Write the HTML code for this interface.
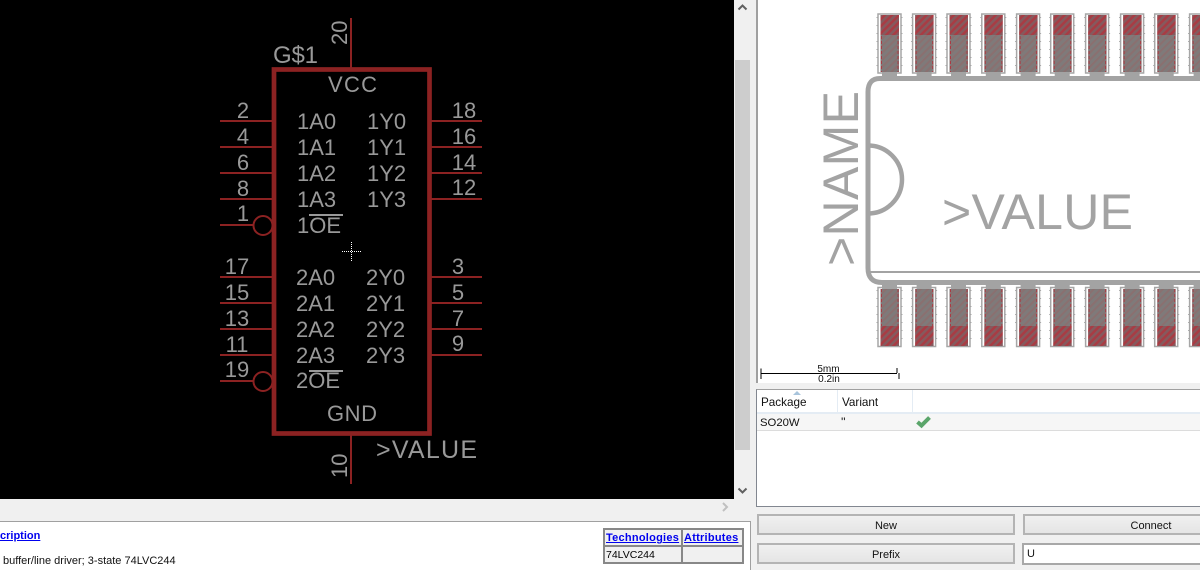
<!DOCTYPE html>
<html><head><meta charset="utf-8"><style>
html,body{margin:0;padding:0;background:#f0f0f0}
#r{position:relative;width:1200px;height:570px;overflow:hidden;background:#f0f0f0;font-family:"Liberation Sans",sans-serif}
#r>*{position:absolute}
.btn{box-sizing:border-box;border:2px solid #b4b4b4;background:linear-gradient(#f0f0f0,#e5e5e5);font-size:11px;color:#111;text-align:center;line-height:21px}
.h{font-size:12px;color:#111}
a{color:#0000ee;font-weight:bold;text-decoration:underline}
td{border:2px solid #888;padding:1px 1px 0;font-size:10.5px;height:14px;white-space:nowrap}
td a{font-size:11px;letter-spacing:.25px}
</style></head><body><div id="r">
<svg style="left:0;top:0" width="734" height="499" viewBox="0 0 734 499">
<rect width="734" height="499" fill="#000"/>
<g fill="none" stroke="#8c2222" stroke-width="2">
<path d="M351 18V68M351 434V484"/>
<path d="M220 121H272M220 147H272M220 173H272M220 199H272M220 225H253M220 277H272M220 303H272M220 329H272M220 355H272M220 381H253"/>
<path d="M430 121H482M430 147H482M430 173H482M430 199H482M430 277H482M430 303H482M430 329H482M430 355H482"/>
<circle cx="263" cy="225.500" r="9.500"/><circle cx="263" cy="381.500" r="9.500"/>
<rect x="274" y="69.500" width="155.500" height="364" stroke-width="4.700"/>
</g>
<g fill="#999" font-size="22" font-family="Liberation Sans">
<text x="273" y="63" font-size="24" textLength="45">G$1</text>
<text x="328" y="92" textLength="49">VCC</text>
<text x="327" y="421" textLength="50">GND</text>
<text x="376" y="458" font-size="25" textLength="101">&gt;VALUE</text>
<text transform="translate(347,45) rotate(-90)">20</text>
<text transform="translate(347,478) rotate(-90)">10</text>
<g text-anchor="middle"><text x="243" y="118">2</text><text x="243" y="144">4</text><text x="243" y="170">6</text><text x="243" y="196">8</text><text x="243" y="221">1</text>
<text x="237" y="274">17</text><text x="237" y="300">15</text><text x="237" y="326">13</text><text x="237" y="352">11</text><text x="237" y="377">19</text>
<text x="458" y="274">3</text><text x="458" y="300">5</text><text x="458" y="326">7</text><text x="458" y="351">9</text>
<text x="464" y="118">18</text><text x="464" y="144">16</text><text x="464" y="170">14</text><text x="464" y="195">12</text></g>
<text x="297" y="129">1A0</text><text x="297" y="155">1A1</text><text x="297" y="181">1A2</text><text x="297" y="207">1A3</text><text x="297" y="233">1OE</text>
<text x="367" y="129">1Y0</text><text x="367" y="155">1Y1</text><text x="367" y="181">1Y2</text><text x="367" y="207">1Y3</text>
<text x="296" y="285">2A0</text><text x="296" y="311">2A1</text><text x="296" y="337">2A2</text><text x="296" y="363">2A3</text><text x="296" y="388">2OE</text>
<text x="366" y="285">2Y0</text><text x="366" y="311">2Y1</text><text x="366" y="337">2Y2</text><text x="366" y="363">2Y3</text>
<rect x="309" y="214" width="34" height="2"/><rect x="309" y="370" width="34" height="2"/>
</g>
<path d="M342 251.500H361M351.500 242V261" stroke="#fff" stroke-width="1" stroke-dasharray="1 1"/>
</svg>

<div style="left:735px;top:60px;width:15px;height:390px;background:#cdcdcd"></div>
<svg style="left:735px;top:0" width="16" height="16"><path d="M3.500 9.500L7.500 5.500L11.500 9.500" fill="none" stroke="#606060" stroke-width="2"/></svg>
<svg style="left:735px;top:483px" width="16" height="16"><path d="M3.500 5.500L7.500 9.500L11.500 5.500" fill="none" stroke="#606060" stroke-width="2"/></svg>
<svg style="left:720px;top:500px" width="14" height="14"><path d="M3 3L7 7L3 11" fill="none" stroke="#c0c0c0" stroke-width="2"/></svg>

<div style="left:0;top:521px;width:751px;height:49px;box-sizing:border-box;background:#fff;border-top:1px solid #a0a0a0;border-right:1px solid #a0a0a0"></div>
<div style="left:0;top:528px;font-size:11px;line-height:16px"><a href="#">cription</a></div>
<div style="left:3px;top:554px;font-size:11px;line-height:15px;color:#111">buffer/line driver; 3-state 74LVC244</div>
<table style="left:603px;top:528px;border-collapse:collapse;border:2px solid #888;background:#f0f0f0;font-family:'Liberation Sans',sans-serif;width:141px">
<tr><td style="width:74px"><a href="#">Technologies</a></td><td><a href="#">Attributes</a></td></tr>
<tr><td>74LVC244</td><td></td></tr></table>

<svg style="left:756px;top:0" width="444" height="389" viewBox="756 0 444 389">
<defs>
<pattern id="a" width="5" height="5" patternUnits="userSpaceOnUse" patternTransform="rotate(45)"><rect width="5" height="5" fill="#855a5e"/><rect width="2.500" height="5" fill="#a83c44"/></pattern>
<pattern id="b" width="5" height="5" patternUnits="userSpaceOnUse" patternTransform="rotate(45)"><rect width="5" height="5" fill="#7f7a7a"/><rect width="2" height="5" fill="#8a7070"/></pattern>
<g id="t"><rect x="1" y="14" width="23" height="59" fill="none" stroke="#a6a6a6" stroke-width="1.500"/>
<path d="M0 17V72M25 17V72" stroke="#a6a6a6" stroke-width="1" stroke-dasharray="1 7"/>
<rect x="3.500" y="15" width="18.500" height="20" fill="url(#a)"/><rect x="3.500" y="35" width="18.500" height="37" fill="url(#b)"/><path d="M4.500 36V72M21 36V72" stroke="#a83c44" stroke-width="1" stroke-dasharray="3 2"/><rect x="5" y="72" width="15" height="5" fill="#a3a3a3"/></g>
<g id="u"><rect x="1" y="287.500" width="23" height="59" fill="none" stroke="#a6a6a6" stroke-width="1.500"/>
<path d="M0 290V345M25 290V345" stroke="#a6a6a6" stroke-width="1" stroke-dasharray="1 7"/>
<rect x="3.500" y="326" width="18.500" height="20" fill="url(#a)"/><rect x="3.500" y="289" width="18.500" height="37" fill="url(#b)"/><path d="M4.500 289V326M21 289V326" stroke="#a83c44" stroke-width="1" stroke-dasharray="3 2"/><rect x="5" y="284" width="15" height="5" fill="#a3a3a3"/></g>
</defs>
<rect x="756" width="444" height="389" fill="#fff"/>
<rect x="756" y="0" width="2" height="389" fill="#a0a0a0"/>
<rect x="756" y="383" width="444" height="6" fill="#f0f0f0"/>
<g fill="none" stroke="#a3a3a3" stroke-width="5">
<path d="M1200 78.500H880Q868 78.500 868 92V268Q868 282.500 882 282.500H1200"/>
<path d="M868 145.500A34 34 0 0 1 868 213.500" stroke-width="4.500"/>
</g>
<rect x="868" y="271" width="332" height="2" fill="#a3a3a3"/>
<g id="pads">
<use href="#t" x="877"/><use href="#t" x="911.600"/><use href="#t" x="946"/><use href="#t" x="980.800"/><use href="#t" x="1015.600"/><use href="#t" x="1049.700"/><use href="#t" x="1084.600"/><use href="#t" x="1119.600"/><use href="#t" x="1153.700"/><use href="#t" x="1188.600"/>
<use href="#u" x="877"/><use href="#u" x="911.600"/><use href="#u" x="946"/><use href="#u" x="980.800"/><use href="#u" x="1015.600"/><use href="#u" x="1049.700"/><use href="#u" x="1084.600"/><use href="#u" x="1119.600"/><use href="#u" x="1153.700"/><use href="#u" x="1188.600"/>
</g>
<g fill="#a3a3a3" font-family="Liberation Sans" font-size="50">
<text x="942" y="229" textLength="191">&gt;VALUE</text>
<text transform="translate(858,266) rotate(-90)" textLength="175">&gt;NAME</text>
</g>
<path d="M761 368.500V379M761 373.500H897M897 368V373M899 373V379" fill="none" stroke="#000"/>
<g font-family="Liberation Sans" font-size="10" fill="#111" text-anchor="middle"><text x="828.500" y="372">5mm</text><text x="829" y="382">0.2in</text></g>
</svg>

<div style="left:756px;top:389px;width:444px;height:118px;box-sizing:border-box;background:#fff;border-left:1px solid #828790;border-top:1px solid #a0a0a0;border-bottom:1px solid #828790"></div>
<div style="left:757px;top:390px;width:443px;height:24px;border-bottom:2px solid #e4ecf4;box-sizing:border-box"></div>
<div style="left:837px;top:390px;width:1px;height:23px;background:#e4ecf4"></div>
<div style="left:912px;top:390px;width:1px;height:23px;background:#e4ecf4"></div>
<svg style="left:792px;top:390px" width="12" height="6"><path d="M1 5L5 1L9 5Z" fill="#a8c4dc"/></svg>
<div class="h" style="left:761px;top:396px;font-size:11.700px">Package</div>
<div class="h" style="left:842px;top:396px;font-size:11.700px">Variant</div>
<div style="left:757px;top:414px;width:443px;height:17px;box-sizing:border-box;background:#f6f6f6;border-bottom:1px solid #dcdcdc"></div>
<div class="h" style="left:760px;top:417px;font-size:11.300px">SO20W</div>
<div class="h" style="left:841px;top:415px">''</div>
<svg style="left:915px;top:414px" width="18" height="15"><path d="M2.500 8L6.500 11.500L14.500 3.500" fill="none" stroke="#5aa56a" stroke-width="4"/></svg>

<div class="btn" style="left:757px;top:514px;width:258px;height:21px">New</div>
<div class="btn" style="left:757px;top:543px;width:258px;height:21px">Prefix</div>
<div class="btn" style="left:1023px;top:514px;width:256px;height:21px">Connect</div>
<div style="left:1022px;top:543px;width:190px;height:22px;box-sizing:border-box;background:#fff;border:2px solid #a8a8a8;font-size:11px;line-height:18px;padding-left:3px;color:#111">U</div>
</div></body></html>
